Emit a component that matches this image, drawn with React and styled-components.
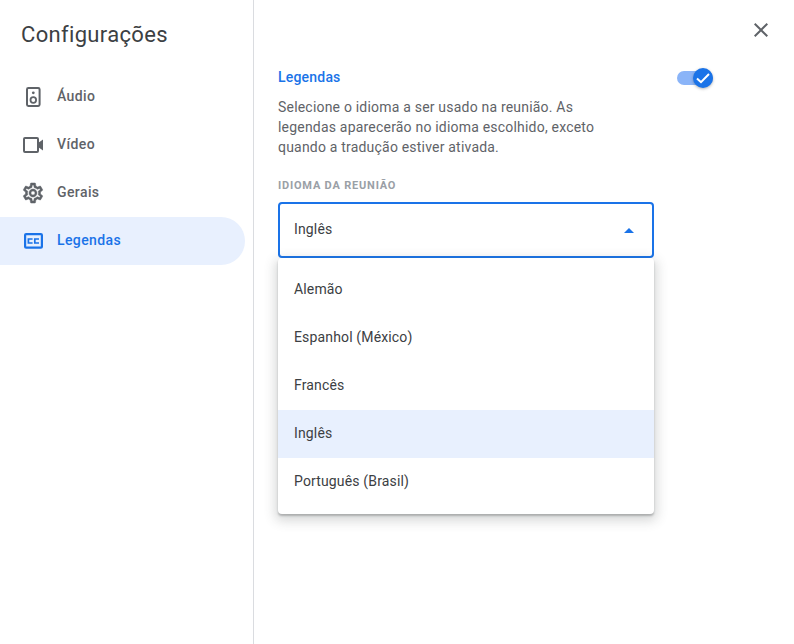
import React from "react";
import styled, { createGlobalStyle } from "styled-components";
import { MdClose } from "react-icons/md";

const GlobalStyle = createGlobalStyle`
  html, body { margin: 0; padding: 0; background: #fff; }
  body { font-family: Roboto, "Liberation Sans", sans-serif; }
`;

const Dialog = styled.div`
  display: flex;
  width: 794px;
  height: 644px;
  overflow: hidden;
  background: #fff;
`;

const Sidebar = styled.aside`
  width: 254px;
  flex-shrink: 0;
  box-sizing: border-box;
  padding-right: 8px;
  border-right: 1px solid #dadce0;
`;

const Title = styled.h1`
  margin: 0;
  padding: 21px 0 0 21px;
  height: 73px;
  box-sizing: border-box;
  font-size: 22px;
  line-height: 28px;
  font-weight: 400;
  letter-spacing: 0.33px;
  color: #3c4043;
`;

const NavItem = styled.div`
  display: flex;
  align-items: center;
  gap: 12px;
  height: 48px;
  padding-left: 21px;
  box-sizing: border-box;
  border-radius: 0 24px 24px 0;
  font-size: 14px;
  font-weight: 500;
  letter-spacing: 0.4px;
  color: ${(p) => (p.$active ? "#1a73e8" : "#5f6368")};
  background: ${(p) => (p.$active ? "#e8f0fe" : "transparent")};
  svg { flex-shrink: 0; }
`;

const NavLabel = styled.span`
  padding-bottom: 3px;
`;

const Main = styled.main`
  flex: 1;
  padding: 18px 21px 0 24px;
`;

const CloseRow = styled.div`
  display: flex;
  justify-content: flex-end;
  height: 48px;
  color: #5f6368;
  svg { font-size: 24px; }
`;

const HeadRow = styled.div`
  display: flex;
  justify-content: space-between;
  align-items: center;
  width: 435px;
  height: 22px;
`;

const SectionTitle = styled.div`
  font-size: 14px;
  font-weight: 500;
  color: #1a73e8;
  letter-spacing: 0.2px;
`;

const Toggle = styled.div`
  position: relative;
  width: 36px;
  height: 14px;
  margin-top: 2px;
  border-radius: 7px;
  background: #8ab4f8;
`;

const Thumb = styled.div`
  position: absolute;
  right: 0;
  top: -3px;
  width: 20px;
  height: 20px;
  border-radius: 50%;
  background: #1a73e8;
  box-shadow: 0 1px 3px rgba(60, 64, 67, 0.4);
  display: flex;
`;

const Description = styled.p`
  margin: 9px 0 0;
  width: 330px;
  font-size: 14px;
  line-height: 20px;
  letter-spacing: 0.2px;
  color: #5f6368;
`;

const FieldLabel = styled.div`
  margin-top: 21px;
  font-size: 11px;
  line-height: 16px;
  font-weight: 700;
  letter-spacing: 0.8px;
  color: #9aa0a6;
`;

const SelectWrap = styled.div`
  position: relative;
  width: 376px;
  margin-top: 8px;
`;

const SelectBox = styled.div`
  display: flex;
  align-items: center;
  justify-content: space-between;
  box-sizing: border-box;
  height: 56px;
  padding: 0 18px 2px 14px;
  border: 2px solid #1a73e8;
  border-radius: 4px;
  font-size: 14px;
  letter-spacing: 0.15px;
  color: #3c4043;
`;

const Caret = styled.span`
  width: 0;
  height: 0;
  margin-top: 2px;
  border-left: 5px solid transparent;
  border-right: 5px solid transparent;
  border-bottom: 5px solid #1a73e8;
`;

const Menu = styled.ul`
  position: absolute;
  top: 56px;
  left: 0;
  right: 0;
  margin: 0;
  padding: 8px 0;
  list-style: none;
  background: #fff;
  border-radius: 4px;
  box-shadow: 0 2px 2px rgba(60, 64, 67, 0.3), 0 4px 12px 3px rgba(60, 64, 67, 0.2);
`;

const MenuItem = styled.li`
  display: flex;
  align-items: center;
  box-sizing: border-box;
  height: 48px;
  padding: 0 0 2px 16px;
  font-size: 14px;
  letter-spacing: 0.15px;
  color: #3c4043;
  background: ${(p) => (p.$selected ? "#e8f0fe" : "transparent")};
`;

const SpeakerIcon = () => (
  <svg width="24" height="24" viewBox="0 0 24 24">
    <rect x="6" y="3" width="12.6" height="18" rx="1.4" fill="none" stroke="currentColor" strokeWidth="2" />
    <circle cx="12.3" cy="7.8" r="1.4" fill="currentColor" />
    <circle cx="12.3" cy="15" r="2.8" fill="none" stroke="currentColor" strokeWidth="1.8" />
  </svg>
);

const VideoIcon = () => (
  <svg width="24" height="24" viewBox="0 0 24 24">
    <rect x="3" y="5" width="14" height="14" rx="1" fill="none" stroke="currentColor" strokeWidth="2" />
    <path d="M17 10 22 6.5V17.5L17 14Z" fill="currentColor" />
  </svg>
);

const GearIcon = () => (
  <svg width="24" height="24" viewBox="0 0 24 24">
    <path
      fill="currentColor"
      stroke="currentColor"
      strokeWidth="0.5"
      d="M19.43 12.98c.04-.32.07-.64.07-.98 0-.34-.03-.66-.07-.98l2.11-1.65c.19-.15.24-.42.12-.64l-2-3.46c-.09-.16-.26-.25-.44-.25-.06 0-.12.01-.17.03l-2.49 1c-.52-.4-1.08-.73-1.69-.98l-.38-2.65C14.46 2.18 14.25 2 14 2h-4c-.25 0-.46.18-.49.42l-.38 2.65c-.61.25-1.17.59-1.69.98l-2.49-1c-.06-.02-.12-.03-.18-.03-.17 0-.34.09-.43.25l-2 3.46c-.13.22-.07.49.12.64l2.11 1.65c-.04.32-.07.65-.07.98 0 .33.03.66.07.98l-2.11 1.65c-.19.15-.24.42-.12.64l2 3.46c.09.16.26.25.44.25.06 0 .12-.01.17-.03l2.49-1c.52.4 1.08.73 1.69.98l.38 2.65c.03.24.24.42.49.42h4c.25 0 .46-.18.49-.42l.38-2.65c.61-.25 1.17-.59 1.69-.98l2.49 1c.06.02.12.03.18.03.17 0 .34-.09.43-.25l2-3.46c.12-.22.07-.49-.12-.64l-2.11-1.65zm-1.98-1.71c.04.31.05.52.05.73 0 .21-.02.43-.05.73l-.14 1.13.89.7 1.08.84-.7 1.21-1.27-.51-1.04-.42-.9.68c-.43.32-.84.56-1.25.73l-1.06.43-.16 1.13-.2 1.35h-1.4l-.19-1.35-.16-1.13-1.06-.43c-.43-.18-.83-.41-1.23-.71l-.91-.7-1.06.43-1.27.51-.7-1.21 1.08-.84.89-.7-.14-1.13c-.03-.31-.05-.54-.05-.74s.02-.43.05-.73l.14-1.13-.89-.7-1.08-.84.7-1.21 1.27.51 1.04.42.9-.68c.43-.32.84-.56 1.25-.73l1.06-.43.16-1.13.2-1.35h1.39l.19 1.35.16 1.13 1.06.43c.43.18.83.41 1.23.71l.91.7 1.06-.43 1.27-.51.7 1.21-1.07.85-.89.7.14 1.13zM12 8c-2.21 0-4 1.79-4 4s1.79 4 4 4 4-1.79 4-4-1.79-4-4-4zm0 6c-1.1 0-2-.9-2-2s.9-2 2-2 2 .9 2 2-.9 2-2 2z"
    />
  </svg>
);

const CaptionIcon = () => (
  <svg width="24" height="24" viewBox="0 0 24 24">
    <rect x="4.1" y="5.1" width="16.8" height="13.6" rx="1" fill="none" stroke="currentColor" strokeWidth="2.2" />
    <path
      d="M11.6 10H7.4V14H11.6M18 10H13.8V14H18"
      fill="none"
      stroke="currentColor"
      strokeWidth="1.7"
    />
  </svg>
);

const navItems = [
  { label: "Áudio", icon: <SpeakerIcon /> },
  { label: "Vídeo", icon: <VideoIcon /> },
  { label: "Gerais", icon: <GearIcon /> },
  { label: "Legendas", icon: <CaptionIcon />, active: true },
];

const languages = ["Alemão", "Espanhol (México)", "Francês", "Inglês", "Português (Brasil)"];

export default function App() {
  return (
    <Dialog>
      <GlobalStyle />
      <Sidebar>
        <Title>Configurações</Title>
        {navItems.map((item) => (
          <NavItem key={item.label} $active={item.active}>
            {item.icon}
            <NavLabel>{item.label}</NavLabel>
          </NavItem>
        ))}
      </Sidebar>
      <Main>
        <CloseRow>
          <MdClose />
        </CloseRow>
        <HeadRow>
          <SectionTitle>Legendas</SectionTitle>
          <Toggle>
            <Thumb>
              <svg width="20" height="20" viewBox="0 0 20 20">
                <path d="M4 10.4 8 14.2 16 6" fill="none" stroke="#fff" strokeWidth="2" />
              </svg>
            </Thumb>
          </Toggle>
        </HeadRow>
        <Description>
          Selecione o idioma a ser usado na reunião. As legendas aparecerão no idioma escolhido, exceto quando a
          tradução estiver ativada.
        </Description>
        <FieldLabel>IDIOMA DA REUNIÃO</FieldLabel>
        <SelectWrap>
          <SelectBox>
            Inglês
            <Caret />
          </SelectBox>
          <Menu>
            {languages.map((lang) => (
              <MenuItem key={lang} $selected={lang === "Inglês"}>
                {lang}
              </MenuItem>
            ))}
          </Menu>
        </SelectWrap>
      </Main>
    </Dialog>
  );
}
